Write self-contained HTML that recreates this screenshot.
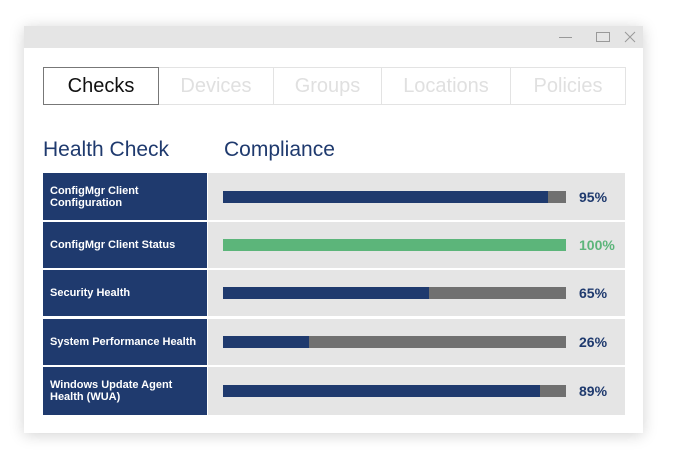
<!DOCTYPE html><html><head><style>
body{margin:0;width:700px;height:467px;background:#fff;position:relative;font-family:"Liberation Sans",sans-serif;overflow:hidden}
.win{position:absolute;left:24px;top:26px;width:619px;height:407px;background:#fff;box-shadow:0 2px 14px rgba(0,0,0,.18)}
.tb{position:absolute;left:0;top:0;width:100%;height:22px;background:#e5e5e5}
.tab{position:absolute;top:67px;height:36px;border:1px solid #e3e3e3;color:#e0e0e0;font-size:20px;text-align:center;line-height:36px;box-sizing:border-box;height:38px}
.h{position:absolute;top:138px;color:#1f3a6e;font-size:21px}
.row{position:absolute;left:43px;width:582px}
.l{position:absolute;left:0;top:0;bottom:0;width:164px;background:#1f3a6e;color:#fff;font-size:11px;font-weight:bold;padding-left:7px;box-sizing:border-box;display:flex;align-items:center;line-height:12px}
.r{position:absolute;left:165px;top:0;bottom:0;right:0;background:#e5e5e5}
.bar{position:absolute;left:15px;width:343px;height:12px;top:50%;margin-top:-6px;background:#707070}
.bar i{position:absolute;left:0;top:0;bottom:0;background:#1f3a6e}
.p{position:absolute;left:371px;top:50%;margin-top:-9px;font-size:14px;font-weight:bold;color:#1f3a6e;line-height:18px}
</style></head><body>
<div class="win"><div class="tb">
<svg style="position:absolute;left:533px;top:5px" width="80" height="13"><line x1="2" y1="6.5" x2="15" y2="6.5" stroke="#999"/><rect x="39.5" y="1.5" width="13" height="9" fill="none" stroke="#999"/><path d="M68 1L78 11M78 1L68 11" stroke="#999"/></svg>
</div></div>
<div class="tab" style="left:43px;width:116px;border-color:#777;color:#111;z-index:2">Checks</div>
<div class="tab" style="left:158px;width:116px">Devices</div>
<div class="tab" style="left:273px;width:109px">Groups</div>
<div class="tab" style="left:381px;width:130px">Locations</div>
<div class="tab" style="left:510px;width:116px">Policies</div>
<div class="h" style="left:43px">Health Check</div>
<div class="h" style="left:224px">Compliance</div>
<div class="row" style="top:173px;height:47px"><div class="l">ConfigMgr Client<br>Configuration</div><div class="r"><div class="bar"><i style="width:325px"></i></div><div class="p">95%</div></div></div>
<div class="row" style="top:222px;height:46px"><div class="l">ConfigMgr Client Status</div><div class="r"><div class="bar" style="background:#5cb57a"></div><div class="p" style="color:#5cb57a">100%</div></div></div>
<div class="row" style="top:270px;height:46px"><div class="l">Security Health</div><div class="r"><div class="bar"><i style="width:206px"></i></div><div class="p">65%</div></div></div>
<div class="row" style="top:319px;height:46px"><div class="l">System Performance Health</div><div class="r"><div class="bar"><i style="width:86px"></i></div><div class="p">26%</div></div></div>
<div class="row" style="top:367px;height:48px"><div class="l">Windows Update Agent<br>Health (WUA)</div><div class="r"><div class="bar"><i style="width:317px"></i></div><div class="p">89%</div></div></div>
</body></html>
